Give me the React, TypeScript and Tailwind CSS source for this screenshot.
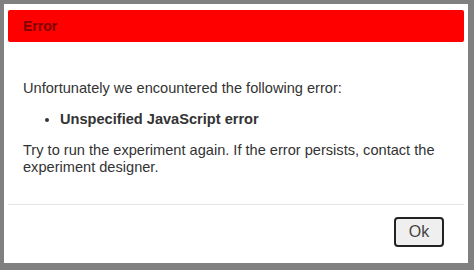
export default function App() {
  return (
    <div className="w-[474px] h-[270px] bg-[#808080] p-[4px] pr-[6px] pb-[7px] font-['Liberation_Sans',Arial,sans-serif]">
      <div className="h-full bg-white flex flex-col px-[4px] pt-[6px]">
        <div className="h-[32px] bg-[#ff0000] rounded-[2px] flex items-center px-[15px]">
          <span className="text-[14px] font-bold text-[#800000]">Error</span>
        </div>
        <div className="px-[15px] pt-[38px] text-[14.6px] text-[#333] leading-[17px]">
          <p>Unfortunately we encountered the following error:</p>
          <ul className="list-disc pl-[37px] mt-[14px] mb-[14px]">
            <li className="font-bold">Unspecified JavaScript error</li>
          </ul>
          <p>Try to run the experiment again. If the error persists, contact the experiment designer.</p>
        </div>
        <div className="mt-auto border-t border-[#e5e5e5] flex justify-end pr-[20px] pt-[12px] pb-[16px]">
          <button className="w-[50px] h-[30px] rounded-[4px] border-2 border-[#222] bg-[#efefef] text-[16px] text-[#444]">Ok</button>
        </div>
      </div>
    </div>
  );
}
